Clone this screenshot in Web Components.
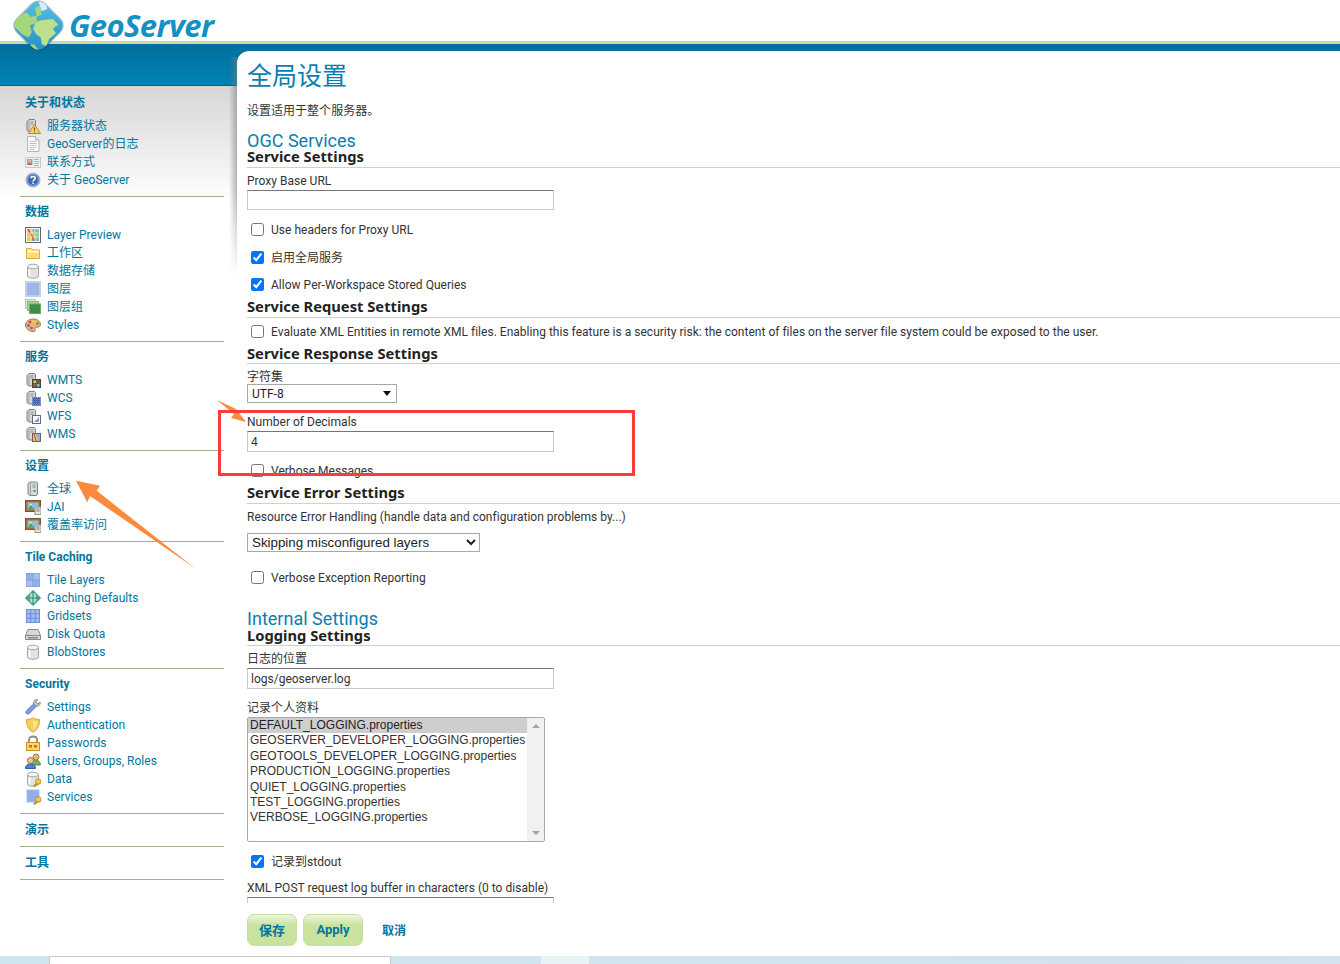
<!DOCTYPE html>
<html lang="zh">
<head>
<meta charset="utf-8">
<title>GeoServer</title>
<style>
  html, body { margin: 0; background: #fff; }
  body { font: 12px/16px Roboto, "Noto Sans CJK SC", sans-serif; letter-spacing: .02px; color: #333; }
</style>
</head>
<body>
<gs-app>
  <gs-header slot="header"></gs-header>
  <gs-sidebar slot="side">
    <gs-nav-section label="关于和状态">
      <gs-nav-item icon="status">服务器状态</gs-nav-item>
      <gs-nav-item icon="log">GeoServer的日志</gs-nav-item>
      <gs-nav-item icon="contact">联系方式</gs-nav-item>
      <gs-nav-item icon="about">关于 GeoServer</gs-nav-item>
    </gs-nav-section>
    <gs-nav-section label="数据">
      <gs-nav-item icon="preview">Layer Preview</gs-nav-item>
      <gs-nav-item icon="folder">工作区</gs-nav-item>
      <gs-nav-item icon="db">数据存储</gs-nav-item>
      <gs-nav-item icon="layer">图层</gs-nav-item>
      <gs-nav-item icon="group">图层组</gs-nav-item>
      <gs-nav-item icon="palette">Styles</gs-nav-item>
    </gs-nav-section>
    <gs-nav-section label="服务">
      <gs-nav-item icon="wmts">WMTS</gs-nav-item>
      <gs-nav-item icon="wcs">WCS</gs-nav-item>
      <gs-nav-item icon="wfs">WFS</gs-nav-item>
      <gs-nav-item icon="wms">WMS</gs-nav-item>
    </gs-nav-section>
    <gs-nav-section label="设置">
      <gs-nav-item icon="tower">全球</gs-nav-item>
      <gs-nav-item icon="picture">JAI</gs-nav-item>
      <gs-nav-item icon="picture">覆盖率访问</gs-nav-item>
    </gs-nav-section>
    <gs-nav-section label="Tile Caching">
      <gs-nav-item icon="tiles">Tile Layers</gs-nav-item>
      <gs-nav-item icon="globe">Caching Defaults</gs-nav-item>
      <gs-nav-item icon="grid">Gridsets</gs-nav-item>
      <gs-nav-item icon="disk">Disk Quota</gs-nav-item>
      <gs-nav-item icon="db">BlobStores</gs-nav-item>
    </gs-nav-section>
    <gs-nav-section label="Security">
      <gs-nav-item icon="wrench">Settings</gs-nav-item>
      <gs-nav-item icon="shield">Authentication</gs-nav-item>
      <gs-nav-item icon="lock">Passwords</gs-nav-item>
      <gs-nav-item icon="users">Users, Groups, Roles</gs-nav-item>
      <gs-nav-item icon="dbkey">Data</gs-nav-item>
      <gs-nav-item icon="layerkey">Services</gs-nav-item>
    </gs-nav-section>
    <gs-nav-section label="演示"></gs-nav-section>
    <gs-nav-section label="工具"></gs-nav-section>
  </gs-sidebar>

  <gs-panel slot="main">
    <gs-title>全局设置</gs-title>
    <gs-text style="margin-top:9px">设置适用于整个服务器。</gs-text>

    <gs-group-title style="margin-top:15px">OGC Services</gs-group-title>
    <gs-heading>Service Settings</gs-heading>
    <gs-field label="Proxy Base URL" style="margin-top:4px"></gs-field>
    <gs-check style="margin-top:11px">Use headers for Proxy URL</gs-check>
    <gs-check checked style="margin-top:12px">启用全局服务</gs-check>
    <gs-check checked style="margin-top:11px">Allow Per-Workspace Stored Queries</gs-check>

    <gs-heading style="margin-top:7px">Service Request Settings</gs-heading>
    <gs-check style="margin-top:5px">Evaluate XML Entities in remote XML files. Enabling this feature is a security risk: the content of files on the server file system could be exposed to the user.</gs-check>

    <gs-heading style="margin-top:7px" gap="3">Service Response Settings</gs-heading>
    <gs-text style="margin-top:4px">字符集</gs-text>
    <gs-charset value="UTF-8"></gs-charset>
    <gs-field label="Number of Decimals" value="4" style="margin-top:10px" tall></gs-field>
    <gs-check style="margin-top:10px">Verbose Messages</gs-check>

    <gs-heading style="margin-top:7px">Service Error Settings</gs-heading>
    <gs-text style="margin-top:4px">Resource Error Handling (handle data and configuration problems by...)</gs-text>
    <gs-select value="Skipping misconfigured layers" style="margin-top:9px"></gs-select>
    <gs-check style="margin-top:17px">Verbose Exception Reporting</gs-check>

    <gs-group-title style="margin-top:26px">Internal Settings</gs-group-title>
    <gs-heading style="margin-top:1px" gap="3">Logging Settings</gs-heading>
    <gs-field label="日志的位置" value="logs/geoserver.log" style="margin-top:4px" tall></gs-field>
    <gs-text style="margin-top:10px">记录个人资料</gs-text>
    <gs-listbox style="margin-top:2px">
      <gs-option selected>DEFAULT_LOGGING.properties</gs-option>
      <gs-option>GEOSERVER_DEVELOPER_LOGGING.properties</gs-option>
      <gs-option>GEOTOOLS_DEVELOPER_LOGGING.properties</gs-option>
      <gs-option>PRODUCTION_LOGGING.properties</gs-option>
      <gs-option>QUIET_LOGGING.properties</gs-option>
      <gs-option>TEST_LOGGING.properties</gs-option>
      <gs-option>VERBOSE_LOGGING.properties</gs-option>
    </gs-listbox>
    <gs-check checked style="margin-top:11px">记录到stdout</gs-check>
    <gs-field label="XML POST request log buffer in characters (0 to disable)" value="1024" style="margin-top:10px" tall></gs-field>

    <gs-actions slot="actions">
      <gs-button>保存</gs-button>
      <gs-button wide>Apply</gs-button>
      <gs-link>取消</gs-link>
    </gs-actions>
  </gs-panel>

  <gs-footer slot="footer"></gs-footer>
  <gs-annotations slot="over"></gs-annotations>
</gs-app>

<script>
// --- icons (16x16 unless the icon says otherwise) ---
const towerShape = `<path d="M2 3.500 4 1.500h5.500l1 1v10l-1.500 1.500H4l-2-1.500z" fill="#d6d8da" stroke="#7d8083"/><path d="M4 2.500V14" stroke="#9a9da0" fill="none"/><path d="M5.500 4h3M5.500 6h3" stroke="#8d9093" fill="none"/>`;
const keyShape = `<path d="M9 15.500 14 10.500" stroke="#c98d14" stroke-width="2" fill="none"/><circle cx="13.300" cy="10.500" r="2.700" fill="#f2c85a" stroke="#c98d14"/><path d="M9.500 13.500l1.500 1.500" stroke="#c98d14" fill="none"/>`;
const cylinder = `<path d="M2.500 3.500v9.500c0 1.300 2.500 2.300 5.500 2.300s5.500-1 5.500-2.300V3.500" fill="#e3e3e3" stroke="#a6a6a6"/><ellipse cx="8" cy="3.500" rx="5.500" ry="2.300" fill="#f5f5f5" stroke="#a6a6a6"/><path d="M4.500 6.500v6.800" stroke="#fff" stroke-width="1.500" fill="none"/>`;
const ICONS = {
  status: `${towerShape}<path d="M9.500 6.500 15.500 15.500h-12z" fill="#f7d25c" stroke="#c08a1a"/><path d="M9.500 9.500v3M9.500 13.500v1" stroke="#6b4a10" fill="none"/>`,
  log: `<path d="M2.500.5h8l3.500 3.500v11.500H2.500z" fill="#fafafa" stroke="#b4b4b4"/><path d="M10.500.5V4H14" fill="#e6e6e6" stroke="#b4b4b4"/><path d="M4.500 5.500h7M4.500 7.500h7M4.500 9.500h7M4.500 11.500h7M4.500 13.500h5" stroke="#c2c2c2" fill="none"/>`,
  contact: `<rect x=".5" y="3.500" width="15" height="10" fill="#f1f1f1" stroke="#c9c9c9"/><rect x="2" y="5" width="5.500" height="6" fill="#7fa3dc"/><circle cx="4.700" cy="7" r="1.600" fill="#e9b98e"/><path d="M2.500 11c.3-2 4-2 4.500 0z" fill="#c8503c"/><path d="M9 5.500h5M9 7.500h5M9 9.500h5M9 11.500h5" stroke="#aab4c4" fill="none"/>`,
  about: `<circle cx="8" cy="8" r="7" fill="#7b9bd3" stroke="#a7b6cf"/><circle cx="8" cy="8" r="5" fill="#3f69ad"/><path d="M6 6.300C6 4 10.200 4 10.200 6.300c0 1.700-2.100 1.500-2.100 3.200M8.100 10.600v1.500" stroke="#fff" stroke-width="1.500" fill="none"/>`,
  preview: `<rect x=".5" y=".5" width="15" height="15" fill="#fff" stroke="#5f6f5f"/><rect x="2" y="2" width="12" height="12" fill="#8fb2e0"/><path d="M2 2h5l2 5-3 7H2z" fill="#e8c75a"/><path d="M9 7l5-3v5l-5 5z" fill="#9ccb78"/><path d="M3 2l4 7 2 5" stroke="#d8402c" stroke-width="1.300" fill="none"/><path d="M2 6h12M2 10h12M6 2v12M10 2v12" stroke="#fff" stroke-opacity=".5" fill="none"/>`,
  folder: `<path d="M1.500 3.500h5l1 1.500h7v8.500h-13z" fill="#fbeaa0" stroke="#e2a83a"/><path d="M3 6.500h10.500" stroke="#fff" fill="none"/><path d="M2.500 8h11v5h-11z" fill="#f8dd7e"/>`,
  db: cylinder,
  layer: `<rect x="1.500" y="1.500" width="13" height="13" fill="#9db8e6" stroke="#c0cde8"/><rect x=".5" y=".5" width="15" height="15" fill="none" stroke="#8ea3c8" stroke-opacity=".5"/>`,
  group: `<rect x=".5" y=".5" width="10" height="9" fill="#d9efd4" stroke="#a8d0a0"/><rect x="2.500" y="2.500" width="11" height="9" fill="#a9d4a0" stroke="#86bb80"/><rect x="4.500" y="5" width="11" height="9.500" fill="#3f8f46" stroke="#6aa76c"/>`,
  palette: `<path d="M8.500 2C4 2 .5 4.500.5 8c0 3.500 3.500 6.500 7.500 6.500 2.200 0 2.500-1.200 2-2.300-.4-1.200.5-2 1.800-2 2.500 0 3.700-1 3.700-2.700C15.500 4.500 12.500 2 8.500 2z" fill="#e8b27a" stroke="#a9753f"/><circle cx="5" cy="5" r="1.300" fill="#d8402c"/><circle cx="9" cy="4.500" r="1.300" fill="#f0d040"/><circle cx="12.500" cy="6.500" r="1.300" fill="#4f9f4f"/><circle cx="3.500" cy="8.500" r="1.300" fill="#3f69ad"/><circle cx="6.500" cy="11" r="1.300" fill="#8f4fa8"/>`,
  wmts: `${towerShape}<rect x="7.500" y="7.500" width="8" height="8" fill="#3e6b45" stroke="#444"/><rect x="8.500" y="8.500" width="2.500" height="2.500" fill="#e8c75a"/><rect x="12" y="8.500" width="2.500" height="2.500" fill="#d8402c"/><rect x="8.500" y="12" width="2.500" height="2.500" fill="#d8402c"/><rect x="12" y="12" width="2.500" height="2.500" fill="#8fb2e0"/>`,
  wcs: `${towerShape}<rect x="7.500" y="7.500" width="8" height="8" fill="#6f8fd8" stroke="#7a8fc0"/><path d="M8 9h7M8 11h7M8 13h7M9.500 8v7M11.500 8v7M13.500 8v7" stroke="#2f4f9f" stroke-dasharray="1 1" fill="none"/>`,
  wfs: `${towerShape}<rect x="7.500" y="7.500" width="8" height="8" fill="#fff" stroke="#6a6a6a"/><path d="M9 14 14 9v5z" fill="#7f9fdc"/>`,
  wms: `${towerShape}<rect x="7.500" y="7.500" width="8" height="8" fill="#8fb2e0" stroke="#666"/><path d="M8 8h3l2 7H8z" fill="#e8c75a"/><path d="M9 8l2 7" stroke="#d8402c" fill="none"/>`,
  tower: `<path d="M3 2.500 5 1h6.500l1 1v11l-1 1.500H5l-2-1.500z" fill="#d6d8da" stroke="#80848a"/><path d="M5.500 1.500V14" stroke="#a0a4a8" fill="none"/><path d="M7.500 4h3M7.500 6h3" stroke="#8a8e92" fill="none"/><rect x="8.500" y="9" width="2" height="2" fill="#3aa04a"/>`,
  picture: `<rect x=".5" y="1.500" width="15" height="11" fill="#a0733a" stroke="#7a5526"/><rect x="2.500" y="3.500" width="11" height="7" fill="#8ec0e4"/><path d="M2.500 10.500 6 6l3 4.500z" fill="#5ea04e"/><rect x="10" y="8" width="6" height="7.500" fill="#e3e3e3" stroke="#9a9a9a"/><path d="M5 4.500l2 1-2 1z" fill="#fff"/><path d="M11.500 10h3M11.500 12h3" stroke="#777" fill="none"/>`,
  tiles: `<rect x="1" y="1" width="14" height="14" fill="#7f9fdc"/><rect x="1.500" y="1.500" width="6" height="6" fill="#8fb0e6"/><rect x="8.500" y="1.500" width="6" height="6" fill="#a6c0ec"/><rect x="1.500" y="8.500" width="6" height="6" fill="#a6c0ec"/><rect x="8.500" y="8.500" width="6" height="6" fill="#8fb0e6"/>`,
  globe: `<path d="M8 .5 15.500 8 8 15.500.5 8z" fill="#2aa6a0" stroke="#2a8f8f" stroke-linejoin="round"/><circle cx="8" cy="8" r="5" fill="#b9e3a8"/><path d="M3 8h10M8 3v10M5 4.500c-1.500 2-1.500 5 0 7M11 4.500c1.500 2 1.500 5 0 7" stroke="#2a7f8f" fill="none"/>`,
  grid: `<rect x="1.500" y="1.500" width="13" height="13" fill="#9fbcec" stroke="#6f90d4"/><path d="M5.800 1.500v13M10.200 1.500v13M1.500 5.800h13M1.500 10.200h13" stroke="#6f90d4" fill="none"/>`,
  disk: `<path d="M.5 9.500 3 3.500h10l2.500 6v4h-15z" fill="#d8d8d8" stroke="#8a8a8a"/><path d="M.5 9.500h15" stroke="#8a8a8a" fill="none"/><rect x="3" y="11" width="10" height="1.500" fill="#8a8a8a"/>`,
  wrench: `<path d="M1.500 14.500c-1-1-.8-2 0-2.800L9 4.500l2.500 2.500-7.200 7.500c-.9.800-1.800 1-2.800 0z" fill="#7c9edb" stroke="#5d7fbf"/><path d="M8.800 5c-.8-2.500 1.200-5 4-4.300L10.800 3l2 2 2.300-2c.6 2.800-1.800 4.900-4.300 4z" fill="#c8c8c8" stroke="#8a8a8a"/>`,
  shield: `<path d="M8 .8c2 1.200 4 1.700 6.500 1.700.2 5.500-1.500 10-6.500 12.700C3 12.500 1.300 8 1.500 2.500 4 2.500 6 2 8 .8z" fill="#f6cf54" stroke="#d9a63a"/><path d="M8 3v10c3-2 4.200-5 4.300-8.500C10.800 4.300 9.300 3.800 8 3z" fill="#fbe58f"/>`,
  lock: `<path d="M4 7.500V4.500c0-4 8-4 8 0v3" fill="none" stroke="#8c8c8c" stroke-width="1.800"/><rect x="1.500" y="7.500" width="13" height="8" fill="#f7d774" stroke="#d08f1e"/><rect x="4" y="10" width="3" height="2.500" fill="#b87a16"/><rect x="9" y="10" width="3" height="2.500" fill="#b87a16"/>`,
  users: `<circle cx="11" cy="4" r="3" fill="#eab27a" stroke="#b87a3a"/><path d="M7 12c0-3.500 1.500-4.500 4-4.500s4.300 1 4.300 4.500z" fill="#74b45a" stroke="#4f8f3f"/><circle cx="5.500" cy="7.500" r="3" fill="#f0c49a" stroke="#a86a3a"/><path d="M.5 15.500c0-3.500 2-4.500 5-4.500s5 1 5 4.500z" fill="#4f7fd0" stroke="#2f5fa8"/>`,
  dbkey: `${cylinder}${keyShape}`,
  layerkey: `<rect x="2" y="1" width="12" height="12" fill="#8fadea" stroke="#a6bdea"/>${keyShape}`
};

const SANS = `Roboto, "Noto Sans CJK SC", sans-serif`;

// small helper: make an element class with a fixed template
function define(tag, css, html, init) {
  const tpl = document.createElement('template');
  tpl.innerHTML = `<style>${css}</style>${html}`;
  customElements.define(tag, class extends HTMLElement {
    constructor() {
      super();
      this.attachShadow({ mode: 'open' }).appendChild(tpl.content.cloneNode(true));
    }
    connectedCallback() {
      if (init) init.call(this, this.shadowRoot);
    }
  });
}

define('gs-app', `
  :host { display: grid; position: relative; width: 1340px; height: 964px; overflow: hidden;
    grid-template: "h h" 44px "s m" 912px "f f" 8px / 237px 1fr; }
  ::slotted([slot=header]) { grid-area: h; }
  ::slotted([slot=side]) { grid-area: s; }
  ::slotted([slot=main]) { grid-area: m; }
  ::slotted([slot=footer]) { grid-area: f; }
  .band { grid-area: 2 / 1 / 3 / 3; height: 42px; background: linear-gradient(#006f9b, #0083b6);
    border-bottom: 1px solid #005e80; box-sizing: border-box; }
`, `<div class="band"></div><slot name="header"></slot><slot name="side"></slot><slot name="main"></slot><slot name="footer"></slot><slot name="over"></slot>`);

define('gs-header', `
  :host { display: flex; align-items: center; height: 44px; box-sizing: border-box; padding: 0 0 0 69px;
    background: #fff; border-bottom: 3px solid #c9dba6; position: relative; }
  svg { position: absolute; left: 8px; top: -3px; z-index: 3; }
  span { font: italic 700 31px/41px "Open Sans", sans-serif; color: #1490c4; letter-spacing: -.6px; margin-top: 9px; }
`, `<svg width="61" height="57" viewBox="0 0 54 52">
  <defs>
    <clipPath id="d"><rect x="9" y="8" width="36" height="36" rx="8" transform="rotate(45 27 26)"/></clipPath>
    <linearGradient id="b" x1="0" y1="0" x2="0" y2="1"><stop offset="0" stop-color="#5cc0e6"/><stop offset="1" stop-color="#1f8fc4"/></linearGradient>
  </defs>
  <rect x="8" y="7" width="38" height="38" rx="9" transform="rotate(45 27 26)" fill="#000" fill-opacity=".22"/>
  <g clip-path="url(#d)">
    <rect width="54" height="52" fill="url(#b)"/>
    <path d="M2 26c3-6 8-10 14-12l4 4 5-1-1-7 4-2c2 3 1 6 2 8l-5 2 1 5-7 3 2 6-3 5-6-3-5-5z" fill="#a6d67a"/>
    <path d="M24 24c4-4 10-3 16-4l5 5-5 4 3 4-6 5-3 7-4-2-1-6-4-3-3-5z" fill="#bde08c"/>
    <path d="M14 44l9-1 6 8-9 1z" fill="#9fd478"/>
    <path d="M27 4l7 2 1 5-5 2z" fill="#d8eef6"/>
  </g>
</svg><span>GeoServer</span>`);

define('gs-sidebar', `
  :host { display: block; padding-top: 42px; position: relative; }
  .wrap { padding: 7px 13px 0 20px; background: linear-gradient(#d6d6d6, #fff 115px); height: 100%; box-sizing: border-box; }
`, `<div class="wrap"><slot></slot></div>`);

define('gs-nav-section', `
  :host { display: block; border-bottom: 1px solid #a3ae91; padding: 1px 0 7px; margin-bottom: 5px; }
  :host(:empty) { padding: 2px 0 7px; }
  :host(:empty) h4 { margin-bottom: 0; }
  h4 { margin: 0 0 5px 5px; font: 700 12px/18px ${SANS}; color: #0076a1; }
  div { display: flex; flex-direction: column; }
  :host(:last-child) { margin-bottom: 0; }
`, `<h4></h4><div><slot></slot></div>`, function (root) {
  root.querySelector('h4').textContent = this.getAttribute('label');
});

define('gs-nav-item', `
  :host { display: flex; align-items: center; gap: 6px; height: 18px; padding-left: 5px; color: #0076a1; }
  svg { width: 16px; height: 16px; flex: none; }
`, `<svg viewBox="0 0 16 16"></svg><slot></slot>`, function (root) {
  root.querySelector('svg').innerHTML = ICONS[this.getAttribute('icon')] || '';
});

define('gs-panel', `
  :host { display: flex; flex-direction: column; margin-top: 7px; position: relative; z-index: 1;
    background: #fff; border-top-left-radius: 12px; min-width: 0; }
  :host::before { content: ""; position: absolute; left: -8px; top: 6px; width: 8px; height: 220px;
    background: linear-gradient(90deg, rgba(120,120,120,0), rgba(120,120,120,.55));
    -webkit-mask-image: linear-gradient(#000 60%, transparent); mask-image: linear-gradient(#000 60%, transparent); }
  .scroll { height: 852px; overflow: hidden; padding: 10px 0 0 10px; box-sizing: border-box; }
  .actions { padding: 11px 0 0 10px; }
`, `<div class="scroll"><slot></slot></div><div class="actions"><slot name="actions"></slot></div>`);

define('gs-title', `:host { display: block; font: 400 25px/32px ${SANS}; color: #0a7eae; }`, `<slot></slot>`);
// padding-top with a shorter height nudges the glyphs down a pixel without changing the row height
define('gs-text', `:host { display: block; line-height: 16px; padding-top: 1px; height: 15px; white-space: nowrap; }`, `<slot></slot>`);
define('gs-group-title', `:host { display: block; font: 400 18px/16px ${SANS}; color: #0a7eae; white-space: nowrap; }`, `<slot></slot>`);

define('gs-heading', `
  :host { display: block; font: 700 14.7px/14px "Noto Sans", "Noto Sans CJK SC", sans-serif; color: #222;
    padding-bottom: 4px; border-bottom: 1px solid #c9dba6; }
  :host([gap="3"]) { padding-bottom: 3px; }
`, `<slot></slot>`);

const inputCss = `input { display: block; box-sizing: border-box; width: 307px; margin: 2px 0 0; height: 20px; padding: 0 3px;
    border: 1px solid #c8c8c8; border-top-color: #767676; border-radius: 0; outline: 0; background: #fff;
    font: 12px ${SANS}; color: #333; }
  :host([tall]) input { height: 21px; }`;
define('gs-field', `:host { display: block; } label { display: block; line-height: 16px; padding-top: 1px; height: 15px; white-space: nowrap; } ${inputCss}`,
  `<label></label><input type="text">`, function (root) {
    root.querySelector('label').textContent = this.getAttribute('label');
    root.querySelector('input').value = this.getAttribute('value') || '';
  });

define('gs-check', `
  :host { display: flex; align-items: center; height: 16px; white-space: nowrap; }
  input { width: 13px; height: 13px; margin: 0 7px 0 4px; flex: none; }
  span { margin-top: 2px; }
`, `<input type="checkbox"><span><slot></slot></span>`, function (root) {
  root.querySelector('input').checked = this.hasAttribute('checked');
});

// the charset select draws its own solid arrow
define('gs-charset', `
  :host { display: block; position: relative; width: 150px; }
  select { display: block; appearance: none; box-sizing: border-box; width: 150px; height: 19px; padding: 1px 0 0 4px; margin: 0;
    border: 1px solid #a8a8a8; border-radius: 0; background: #fff; font: 12px ${SANS}; color: #222; }
  i { position: absolute; right: 6px; top: 7px; border: 4px solid transparent; border-top: 5px solid #111; border-bottom: 0; }
`, `<select><option></option></select><i></i>`, function (root) {
  root.querySelector('option').textContent = this.getAttribute('value');
});

define('gs-select', `
  :host { display: block; }
  select { display: block; box-sizing: border-box; width: 233px; height: 19px; margin: 0; padding: 0;
    border: 1px solid #a8a8a8; border-radius: 0; background: #fff; font: 13.33px "Liberation Sans", sans-serif; color: #222; }
`, `<select><option></option></select>`, function (root) {
  root.querySelector('option').textContent = this.getAttribute('value');
});

define('gs-listbox', `
  :host { display: flex; box-sizing: border-box; width: 298px; height: 125px; border: 1px solid #a8a8a8; border-radius: 2px; background: #fff; }
  .rows { flex: 1; min-width: 0; overflow: hidden; }
  .bar { width: 17px; flex: none; background: #f1f1f1; display: flex; flex-direction: column; justify-content: space-between; align-items: center; padding: 6px 0; box-sizing: border-box; }
  .bar i { border: 4px solid transparent; }
  .up { border-bottom: 4px solid #a3a3a3 !important; border-top: 0 !important; }
  .down { border-top: 4px solid #a3a3a3 !important; border-bottom: 0 !important; }
`, `<div class="rows"><slot></slot></div><div class="bar"><i class="up"></i><i class="down"></i></div>`);

define('gs-option', `
  :host { display: block; height: 15.4px; padding: 0 2px; font: 12px/15.4px "Liberation Sans", sans-serif; letter-spacing: 0; color: #333; white-space: nowrap; }
  :host([selected]) { background: #cecece; color: #222; }
`, `<slot></slot>`);

define('gs-actions', `:host { display: flex; align-items: center; gap: 6px; height: 32px; }`, `<slot></slot>`);

define('gs-button', `
  :host { display: flex; align-items: center; justify-content: center; box-sizing: border-box; width: 50px; height: 32px; padding-bottom: 2px;
    border: 1px solid #c7dfa3; border-radius: 7px; background: linear-gradient(#edf5df, #c9e29d 35%);
    font: 700 13px ${SANS}; color: #0076a1; }
  :host([wide]) { width: 60px; }
`, `<slot></slot>`);

define('gs-link', `:host { display: block; margin-left: 13px; padding-bottom: 2px; font: 700 12px ${SANS}; color: #0076a1; }`, `<slot></slot>`);

define('gs-footer', `
  :host { display: flex; position: relative; z-index: 2; height: 8px; background: linear-gradient(90deg, #cfe5ee, #d2e2ef); }
  .white { margin-left: 49px; width: 342px; box-sizing: border-box; background: #fff; border: 1px solid #c8c8c8; border-bottom: 0; }
  .pale { margin-left: 150px; width: 48px; background: #e8f3f7; }
`, `<div class="white"></div><div class="pale"></div>`);

// hand-drawn markup on top of the screenshot: arrows + red box
define('gs-annotations', `
  :host { display: block; position: absolute; inset: 0; z-index: 5; pointer-events: none; }
  svg { display: block; }
`, `<svg width="1340" height="964" viewBox="0 0 1340 964">
  <path d="M76 480.700 100 485.700 96.700 490.700 195 568.300 90 496 87.300 502.300z" fill="#fb8a3c"/>
  <path d="M217 400 236 409 246 422 231 418 234 414z" fill="#fb8a3c"/>
  <rect x="219.500" y="411.500" width="414" height="63" fill="none" stroke="#fb3c3c" stroke-width="3"/>
</svg>`);
</script>
</body>
</html>
